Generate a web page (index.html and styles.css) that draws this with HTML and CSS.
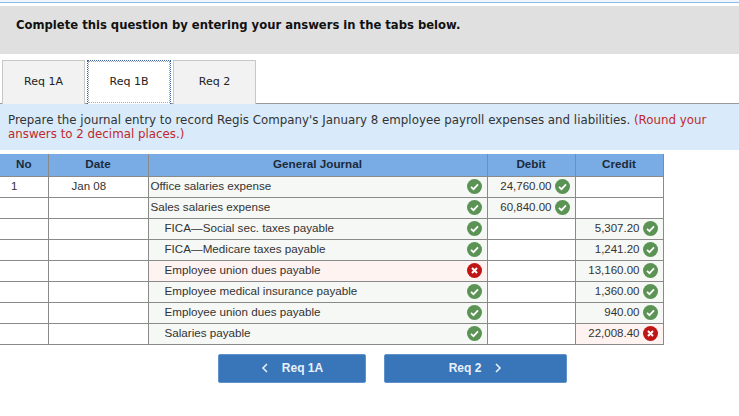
FILE: index.html
```html
<!DOCTYPE html>
<html lang="en">
<head>
<meta charset="utf-8">
<title>Journal entry</title>
<link rel="stylesheet" href="styles.css">
</head>
<body>
<svg class="defs" width="0" height="0" aria-hidden="true">
  <symbol id="ok" viewBox="0 0 15 15"><circle cx="7.5" cy="7.5" r="7.5" fill="#5b9355"/><path d="M4 7.8l2.5 2.4L11 5.4" fill="none" stroke="#fff" stroke-width="1.7"/></symbol>
  <symbol id="bad" viewBox="0 0 15 15"><circle cx="7.5" cy="7.5" r="7.5" fill="#bf1515"/><path d="M5 5l5 5M10 5l-5 5" fill="none" stroke="#fff" stroke-width="2"/></symbol>
</svg>
<div class="topline"></div>
<div class="banner">Complete this question by entering your answers in the tabs below.</div>
<div class="tabs">
  <div class="tab">Req 1A</div>
  <div class="tab tab-active">Req 1B</div>
  <div class="tab">Req 2</div>
</div>
<div class="prompt">Prepare the journal entry to record Regis Company's January 8 employee payroll expenses and liabilities. <span class="red">(Round your answers to 2 decimal places.)</span></div>
<table class="journal">
  <thead>
    <tr><th class="c-no">No</th><th class="c-date">Date</th><th class="c-gj">General Journal</th><th class="c-amt">Debit</th><th class="c-amt">Credit</th></tr>
  </thead>
  <tbody>
    <tr><td class="num">1</td><td class="date">Jan 08</td><td class="acct good"><div class="cell"><span>Office salaries expense</span><svg class="ico"><use href="#ok"/></svg></div></td><td class="amt good"><div class="cell"><span>24,760.00</span><svg class="ico"><use href="#ok"/></svg></div></td><td></td></tr>
    <tr><td></td><td></td><td class="acct good"><div class="cell"><span>Sales salaries expense</span><svg class="ico"><use href="#ok"/></svg></div></td><td class="amt good"><div class="cell"><span>60,840.00</span><svg class="ico"><use href="#ok"/></svg></div></td><td></td></tr>
    <tr><td></td><td></td><td class="acct good"><div class="cell indent"><span>FICA—Social sec. taxes payable</span><svg class="ico"><use href="#ok"/></svg></div></td><td></td><td class="amt good"><div class="cell"><span>5,307.20</span><svg class="ico"><use href="#ok"/></svg></div></td></tr>
    <tr><td></td><td></td><td class="acct good"><div class="cell indent"><span>FICA—Medicare taxes payable</span><svg class="ico"><use href="#ok"/></svg></div></td><td></td><td class="amt good"><div class="cell"><span>1,241.20</span><svg class="ico"><use href="#ok"/></svg></div></td></tr>
    <tr><td></td><td></td><td class="acct wrong"><div class="cell indent"><span>Employee union dues payable</span><svg class="ico"><use href="#bad"/></svg></div></td><td></td><td class="amt good"><div class="cell"><span>13,160.00</span><svg class="ico"><use href="#ok"/></svg></div></td></tr>
    <tr><td></td><td></td><td class="acct good"><div class="cell indent"><span>Employee medical insurance payable</span><svg class="ico"><use href="#ok"/></svg></div></td><td></td><td class="amt good"><div class="cell"><span>1,360.00</span><svg class="ico"><use href="#ok"/></svg></div></td></tr>
    <tr><td></td><td></td><td class="acct good"><div class="cell indent"><span>Employee union dues payable</span><svg class="ico"><use href="#ok"/></svg></div></td><td></td><td class="amt good"><div class="cell"><span>940.00</span><svg class="ico"><use href="#ok"/></svg></div></td></tr>
    <tr><td></td><td></td><td class="acct good"><div class="cell indent"><span>Salaries payable</span><svg class="ico"><use href="#ok"/></svg></div></td><td></td><td class="amt wrong"><div class="cell"><span>22,008.40</span><svg class="ico"><use href="#bad"/></svg></div></td></tr>
  </tbody>
</table>
<div class="nav">
  <button class="btn btn-prev" type="button"><svg class="chev" viewBox="0 0 8 10"><path d="M6 1L2 5l4 4"/></svg><span>Req 1A</span></button>
  <button class="btn btn-next" type="button"><span>Req 2</span><svg class="chev" viewBox="0 0 8 10"><path d="M2 1l4 4-4 4"/></svg></button>
</div>
</body>
</html>
```
FILE: styles.css
```css
* { box-sizing: border-box; }
html, body { margin: 0; padding: 0; background: #fff; }
body { width: 739px; height: 416px; overflow: hidden; font-family: "DejaVu Sans", Verdana, sans-serif; color: #222; }
.defs { position: absolute; }
.topline { height: 3px; border-bottom: 1px solid #8dbbea; background: #eef5fc; }
.banner { margin-top: 3px; height: 48px; background: #e0e0e0; padding: 11px 16px 0; font-size: 11.6px; font-weight: 700; line-height: 16px; color: #111; }
.tabs { display: flex; height: 50px; padding: 6px 0 0 2px; gap: 2px; border-bottom: 1px solid #999; }
.tab { width: 83px; height: 44px; background: #f2f2f2; border: 1px solid #c8c8c8; border-bottom: 0; font-size: 11px; text-align: center; line-height: 41px; }
.tab-active { width: 84px; background: #fff; border: 1px dotted #3a5f94; outline: 1px dotted #9aa9c0; outline-offset: -2px; border-bottom: 0; height: 44px; }
.prompt { height: 46px; background: #d9ebfa; padding: 9px 8px 0; font-size: 11.83px; line-height: 14px; color: #333; }
.red { color: #c0282d; }
.journal { margin-top: 4px; width: 663px; border-collapse: collapse; table-layout: fixed; font-family: "Liberation Sans", Arial, sans-serif; font-size: 11.5px; color: #333; }
.journal th { height: 22px; padding: 0 0 2px; background: #79ace5; border: 1px solid #8a8a8a; border-top: 0; font-weight: 700; color: #1c2a3a; font-size: 11.7px; }
.journal td { height: 21px; padding: 0; border: 1px solid #8a8a8a; vertical-align: middle; }
.journal tr > :first-child { border-left: 0; }
.c-no { width: 48px; }
.c-date { width: 100px; }
.c-gj { width: 339px; }
.c-amt { width: 88px; }
.num { padding-left: 11px !important; padding-bottom: 2px !important; }
.date { padding-left: 23px !important; padding-bottom: 2px !important; }
.good { background: #f6f8f5; }
.wrong { background: #fff3f2; }
.cell { display: flex; align-items: center; justify-content: space-between; height: 20px; }
.cell span { position: relative; top: -1px; }
.acct .cell { padding: 0 5px 0 2px; font-size: 11.65px; }
.acct .indent { padding-left: 16px; }
.amt .cell { justify-content: flex-end; gap: 3px; padding-right: 5px; }
.ico { width: 15px; height: 15px; flex: none; }
.nav { display: flex; margin: 9px 0 0 218px; gap: 18px; }
.btn { display: flex; align-items: center; justify-content: center; gap: 13px; height: 29px; padding: 0; background: #3875b9; border: 1px solid #5f92ca; border-radius: 2px; color: #e8f0f8; font-family: "Liberation Sans", Arial, sans-serif; font-size: 12px; font-weight: 700; }
.btn-prev { width: 148px; }
.btn-next { width: 183px; }
.chev { width: 8px; height: 10px; fill: none; stroke: #e8f0f8; stroke-width: 1.6; }
```
